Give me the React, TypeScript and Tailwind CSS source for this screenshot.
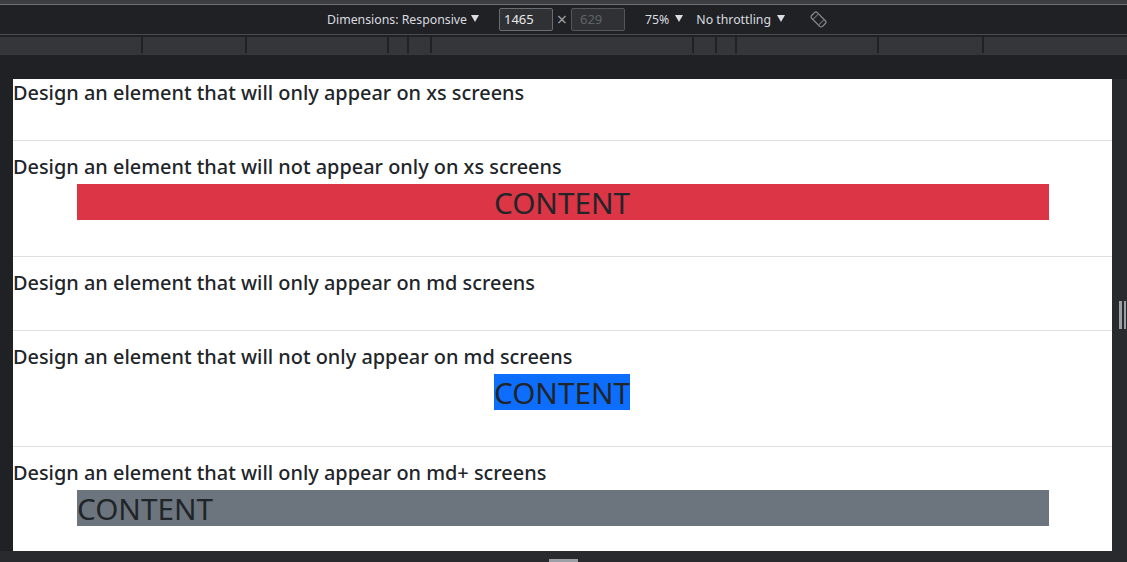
const font = { fontFamily: '"Noto Sans", "Open Sans", sans-serif' };

function Arrow({ ml = "ml-[4px]" }: { ml?: string }) {
  return <span className={`inline-block w-0 h-0 border-l-[4px] border-r-[4px] border-t-[7px] border-l-transparent border-r-transparent border-t-[#dadce0] mb-[2px] ${ml}`} />;
}

const ticks = [143, 104, 142, 20, 23, 262, 23, 20, 142, 105];

function Section({ title, children, h, first = false, hr = true }: { title: string; children?: React.ReactNode; h: string; first?: boolean; hr?: boolean }) {
  return (
    <section className={`${h} ${hr ? "border-b border-[#dfdfdf]" : ""}`}>
      <h5 className={`text-[19.9px] leading-[24px] font-medium text-[#212529] whitespace-nowrap ${first ? "pt-[2px]" : "pt-[14px] mb-[5px]"}`}>{title}</h5>
      {children}
    </section>
  );
}

function Content({ className }: { className: string }) {
  return <div className={`h-9 text-[29.7px] leading-[38px] text-[#212529] ${className}`}>CONTENT</div>;
}

export default function App() {
  return (
    <div className="w-[1127px] h-[562px] overflow-hidden bg-[#202124] flex flex-col" style={font}>
      <div className="h-1 bg-[#3c3d41]" />
      <div className="h-px bg-[#6f7073]" />
      <div className="h-[29px] bg-[#202124] flex items-center text-[12.3px] text-[#dadce0] pl-[327px]">
        <span className="mt-px">Dimensions: Responsive</span>
        <Arrow ml="ml-[4px]" />
        <span className="ml-[20px] w-[54px] h-[23px] border border-[#6b6c6f] rounded-[2px] bg-[#303134] pl-1 leading-[21px] text-[13px] text-[#e8eaed]">1465</span>
        <span className="w-[18px] text-center text-[18px] leading-[23px] text-[#9aa0a6]">×</span>
        <span className="w-[54px] h-[23px] border border-[#55565a] rounded-[2px] bg-[#303134] pl-2 leading-[21px] text-[13px] text-[#5f6368]">629</span>
        <span className="ml-[20px] mt-px">75%</span>
        <Arrow ml="ml-[6px]" />
        <span className="ml-[13px] mt-px">No throttling</span>
        <Arrow ml="ml-[6px]" />
        <svg className="ml-[25px]" width="17" height="17" viewBox="0 0 17 17" fill="none" stroke="#8a8c90" strokeWidth="1.2">
          <rect x="4.5" y="0.8" width="8" height="15.4" rx="2" transform="rotate(-45 8.5 8.5)" />
          <path d="M3.2 8.2 8.2 3.2M8.8 13.8 13.8 8.8" stroke="#6a6c70" />
        </svg>
      </div>
      <div className="h-px bg-[#4a4b4e]" />
      <div className="h-[2px] bg-[#202124]" />
      <div className="h-[18px] bg-[#35363a] flex">
        {ticks.map((w, i) => (
          <div key={i} className="h-[16px] border-r-2 border-[#202124] shrink-0" style={{ width: w }} />
        ))}
      </div>
      <div className="h-6 bg-[#202124]" />
      <div className="flex flex-1 min-h-0">
        <div className="w-[13px] bg-[#202124]" />
        <main className="w-[1099px] bg-white">
          <Section first title="Design an element that will only appear on xs screens" h="h-[62px]" />
          <Section title="Design an element that will not appear only on xs screens" h="h-[116px]">
            <Content className="ml-[64px] mr-[63px] pr-[2px] bg-[#dc3545] text-center" />
          </Section>
          <Section title="Design an element that will only appear on md screens" h="h-[74px]" />
          <Section title="Design an element that will not only appear on md screens" h="h-[116px]">
            <div className="flex justify-center pr-[1px]">
              <Content className="bg-[#0d6efd]" />
            </div>
          </Section>
          <Section title="Design an element that will only appear on md+ screens" h="h-[104px]" hr={false}>
            <Content className="ml-[64px] mr-[63px] bg-[#6c757d]" />
          </Section>
        </main>
        <div className="w-[15px] bg-[#292a2d] flex items-center pl-[7px] gap-[2px]">
          <div className="w-[3px] h-7 bg-[#9aa0a6]" />
          <div className="w-[2px] h-7 bg-[#9aa0a6]" />
        </div>
      </div>
      <div className="h-[11px] bg-[#292a2d] flex justify-center pt-2 pr-px">
        <div className="w-[29px] h-[3px] bg-[#9aa0a6]" />
      </div>
    </div>
  );
}
